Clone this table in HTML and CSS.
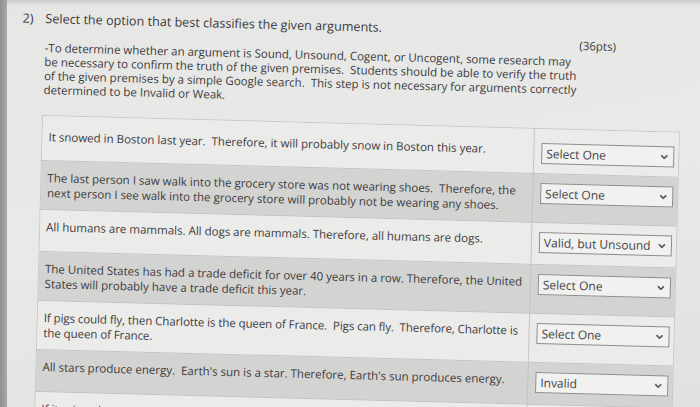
FILE: index.html
```html
<!DOCTYPE html>
<html>
<head>
<meta charset="utf-8">
<link rel="stylesheet" href="styles.css">
</head>
<body>
<div class="frame">
  <div class="edge"></div>
  <div class="page">
    <div class="tilt">
      <div class="question">
        <span class="num">2)</span>
        <div class="qbody">
          <div class="title">Select the option that best classifies the given arguments.</div>
          <div class="pts">(36pts)</div>
          <p class="intro">-To determine whether an argument is Sound, Unsound, Cogent, or Uncogent, some research may be necessary to confirm the truth of the given premises.&nbsp; Students should be able to verify the truth of the given premises by a simple Google search.&nbsp; This step is not necessary for arguments correctly determined to be Invalid or Weak.</p>
        </div>
      </div>
      <div class="table">
        <div class="row light first">
          <div class="arg">It snowed in Boston last year.&nbsp; Therefore, it will probably snow in Boston this year.</div>
          <div class="ans"><div class="select"><span>Select One</span><svg class="chev" viewBox="0 0 8 5"><path d="M1 1 L4 4 L7 1" /></svg></div></div>
        </div>
        <div class="row dark">
          <div class="arg">The last person I saw walk into the grocery store was not wearing shoes.&nbsp; Therefore, the next person I see walk into the grocery store will probably not be wearing any shoes.</div>
          <div class="ans"><div class="select"><span>Select One</span><svg class="chev" viewBox="0 0 8 5"><path d="M1 1 L4 4 L7 1" /></svg></div></div>
        </div>
        <div class="row light">
          <div class="arg">All humans are mammals. All dogs are mammals. Therefore, all humans are dogs.</div>
          <div class="ans"><div class="select"><span>Valid, but Unsound</span><svg class="chev" viewBox="0 0 8 5"><path d="M1 1 L4 4 L7 1" /></svg></div></div>
        </div>
        <div class="row dark">
          <div class="arg">The United States has had a trade deficit for over 40 years in a row. Therefore, the United States will probably have a trade deficit this year.</div>
          <div class="ans"><div class="select"><span>Select One</span><svg class="chev" viewBox="0 0 8 5"><path d="M1 1 L4 4 L7 1" /></svg></div></div>
        </div>
        <div class="row light">
          <div class="arg tight">If pigs could fly, then Charlotte is the queen of France.&nbsp; Pigs can fly.&nbsp; Therefore, Charlotte is the queen of France.</div>
          <div class="ans"><div class="select"><span>Select One</span><svg class="chev" viewBox="0 0 8 5"><path d="M1 1 L4 4 L7 1" /></svg></div></div>
        </div>
        <div class="row dark">
          <div class="arg">All stars produce energy.&nbsp; Earth's sun is a star. Therefore, Earth's sun produces energy.</div>
          <div class="ans"><div class="select"><span>Invalid</span><svg class="chev" viewBox="0 0 8 5"><path d="M1 1 L4 4 L7 1" /></svg></div></div>
        </div>
        <div class="row light">
          <div class="arg">If it rains, the ground will be wet.</div>
          <div class="ans"><div class="select"><span>Select One</span><svg class="chev" viewBox="0 0 8 5"><path d="M1 1 L4 4 L7 1" /></svg></div></div>
        </div>
      </div>
    </div>
  </div>
</div>
</body>
</html>
```
FILE: styles.css
```css
html, body {
  margin: 0;
  padding: 0;
  height: 100%;
  overflow: hidden;
}
body {
  font-family: "Open Sans", "Noto Sans", sans-serif;
  color: #3b3b3d;
  background: #e4e4e3;
}
.frame {
  display: flex;
  height: 407px;
}
.edge {
  width: 7px;
  flex: none;
  background: linear-gradient(to right, #8f8f8f, #a9a9a9);
}
.page {
  flex: 1;
  overflow: hidden;
  background:
    linear-gradient(to bottom, rgba(150,150,150,0.35) 0px, rgba(150,150,150,0) 6px),
    linear-gradient(170deg, #e6e6e5 0%, #e9e9e8 50%, #e1e1e0 100%);
}
.tilt {
  padding: 19px 0 0 11px;
  transform: rotate(1.5deg);
  transform-origin: 340px 200px;
}
.question {
  display: flex;
  gap: 12px;
}
.num {
  font-size: 12.5px;
  line-height: 16px;
}
.qbody {
  width: 575px;
}
.title {
  font-size: 12.6px;
  line-height: 16px;
}
.pts {
  text-align: right;
  font-size: 11.5px;
  line-height: 14px;
  margin-top: -2px;
  padding-right: 4px;
}
.intro {
  margin: 2px 0 0;
  font-size: 11.5px;
  line-height: 14px;
  width: 540px;
}
.table {
  margin: 18px 0 0 22px;
  width: 636px;
  border: 1px solid #c8c8c7;
}
.row {
  display: flex;
  border-bottom: 1px solid #c4c4c3;
}
.row.light { background: #ebebea; }
.row.dark { background: #d3d3d2; }
.arg {
  width: 480px;
  padding: 9px 5px 9px 6px;
  font-size: 11.5px;
  line-height: 15px;
  border-right: 1px solid #c4c4c3;
}
.arg.tight {
  letter-spacing: -0.08px;
}
.first .arg {
  padding-top: 13px;
}
.ans {
  flex: 1;
  padding: 9px 0 11px 7px;
}
.first .ans {
  padding-top: 14px;
  padding-bottom: 9px;
}
.select {
  box-sizing: border-box;
  width: 133px;
  height: 21px;
  display: flex;
  align-items: center;
  justify-content: space-between;
  padding: 0 5px 0 4px;
  background: #f1f1f0;
  border: 1px solid #8d8d8d;
  font-size: 12px;
  color: #454547;
}
.chev {
  width: 8px;
  height: 5px;
  fill: none;
  stroke: #555;
  stroke-width: 1.6;
}
```
